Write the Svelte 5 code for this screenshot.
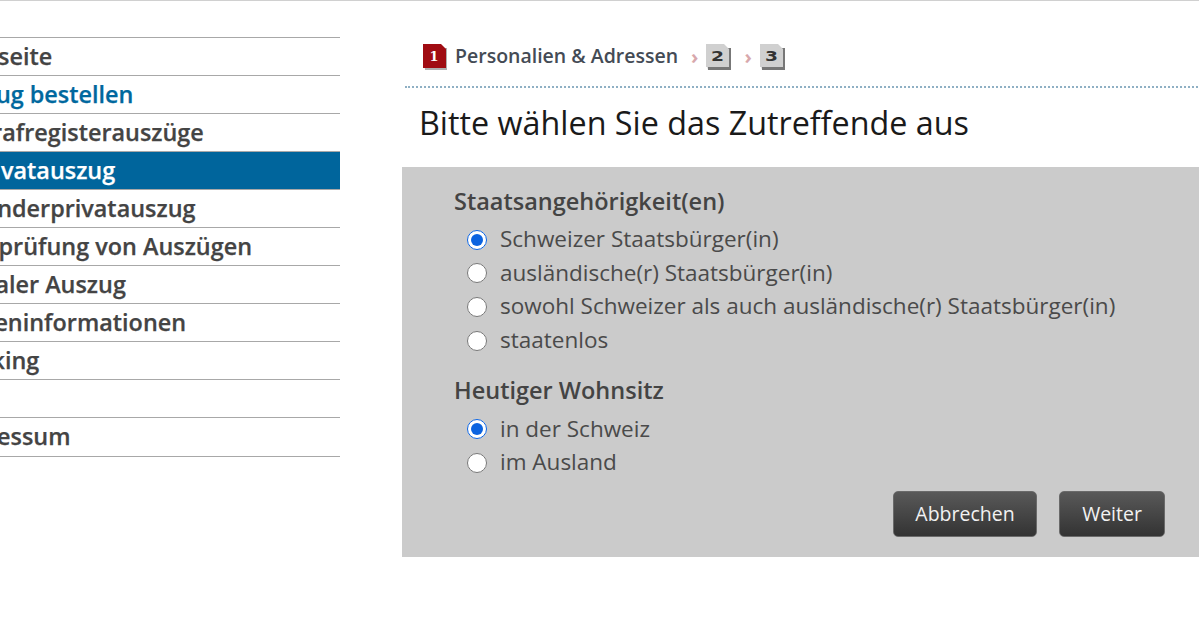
<script>
  const navItems = [
    { label: "Startseite" },
    { label: "Auszug bestellen", current: true },
    { label: "Strafregisterauszüge", sub: true },
    { label: "Privatauszug", sub: true, active: true },
    { label: "Sonderprivatauszug", sub: true },
    { label: "Überprüfung von Auszügen" },
    { label: "Digitaler Auszug" },
    { label: "Firmeninformationen" },
    { label: "Tracking" },
    { label: "FAQ" },
    { label: "Impressum" },
  ];

  const nationality = [
    { label: "Schweizer Staatsbürger(in)", checked: true },
    { label: "ausländische(r) Staatsbürger(in)" },
    { label: "sowohl Schweizer als auch ausländische(r) Staatsbürger(in)" },
    { label: "staatenlos" },
  ];

  const residence = [
    { label: "in der Schweiz", checked: true },
    { label: "im Ausland" },
  ];
</script>

<div class="page">
  <nav class="nav">
    <ul>
      {#each navItems as item}
        <li class:sub={item.sub} class:current={item.current} class:active={item.active}>{item.label}</li>
      {/each}
    </ul>
  </nav>

  <main class="main">
    <div class="steps">
      <svg class="step" viewBox="0 0 25 26" width="25" height="26">
        <path d="M0 4h24v22H2z" fill="#6e6e6e" opacity="0.55" />
        <path d="M0 0h18l5 5v19H0z" fill="#a00c12" />
        <text x="11" y="17" class="num-active">1</text>
      </svg>
      <span class="step-label">Personalien &amp; Adressen</span>
      <span class="chevron">›</span>
      <svg class="step" viewBox="0 0 25 26" width="25" height="26">
        <path d="M0 4h25v22H2z" fill="#777" />
        <path d="M0 0h18l5 5v18H0z" fill="#d0d0d0" />
        <text x="11.5" y="17" class="num" textLength="13" lengthAdjust="spacingAndGlyphs">2</text>
      </svg>
      <span class="chevron">›</span>
      <svg class="step" viewBox="0 0 25 26" width="25" height="26">
        <path d="M0 4h25v22H2z" fill="#777" />
        <path d="M0 0h18l5 5v18H0z" fill="#d0d0d0" />
        <text x="11.5" y="17" class="num" textLength="13" lengthAdjust="spacingAndGlyphs">3</text>
      </svg>
    </div>

    <h1>Bitte wählen Sie das Zutreffende aus</h1>

    <form class="panel">
      <fieldset>
        <legend>Staatsangehörigkeit(en)</legend>
        {#each nationality as option}
          <label><input type="radio" name="nationality" checked={option.checked} />{option.label}</label>
        {/each}
      </fieldset>

      <fieldset>
        <legend>Heutiger Wohnsitz</legend>
        {#each residence as option}
          <label><input type="radio" name="residence" checked={option.checked} />{option.label}</label>
        {/each}
      </fieldset>

      <div class="actions">
        <button type="button" class="abort">Abbrechen</button>
        <button type="button" class="next">Weiter</button>
      </div>
    </form>
  </main>
</div>

<style>
  :global(body) {
    background: #fff;
    overflow: hidden;
  }

  .page {
    display: flex;
    align-items: flex-start;
    width: 1199px;
    height: 630px;
    box-sizing: border-box;
    border-top: 1px solid #d0d0d0;
    overflow: hidden;
    font-family: "Open Sans", "Noto Sans", sans-serif;
    color: #444;
  }

  /* Nav is cut off by the left window edge */
  .nav {
    flex: none;
    width: 397px;
    margin-left: -57px;
    margin-top: 35.5px;
  }

  ul {
    list-style: none;
    margin: 0;
    padding: 0;
    border-top: 1px solid #a8a8a8;
  }

  li {
    height: 37.1px;
    line-height: 37px;
    border-bottom: 1px solid #a8a8a8;
    font-size: 23.4px;
    font-weight: 600;
    -webkit-text-stroke: 0.25px currentColor;
    white-space: nowrap;
  }

  li.sub {
    padding-left: 27px;
  }

  li.current {
    color: #00689e;
  }

  li.active {
    background: #00659c;
    color: #fff;
  }

  .main {
    flex: none;
    width: 820px;
    margin-left: 62px;
  }

  .steps {
    display: flex;
    align-items: center;
    height: 26px;
    margin: 43px 0 0 3px;
    padding: 0 0 16px 18px;
    border-bottom: 2px dotted #8fb0c4;
  }

  .step {
    flex: none;
  }

  .num-active,
  .num {
    font-weight: 700;
    text-anchor: middle;
  }

  .num-active {
    font-family: "DejaVu Serif", serif;
    font-size: 13px;
    fill: #fff;
  }

  .num {
    font-family: "DejaVu Sans", sans-serif;
    font-size: 14px;
    fill: #333;
  }

  .step-label {
    margin-left: 7px;
    padding-bottom: 4px;
    font-size: 19.5px;
    font-weight: 600;
    color: #444b55;
  }

  .chevron {
    margin: 0 8px 0 13px;
    font-size: 20px;
    font-weight: 700;
    line-height: 1;
    color: #d8a8ac;
  }

  h1 {
    margin: 13px 0 24px 17px;
    font-size: 32.3px;
    line-height: 42px;
    font-weight: 400;
    color: #1a1a1a;
  }

  .panel {
    height: 390px;
    box-sizing: border-box;
    padding: 20px 57px 0 52px;
    background: #cbcbcb;
  }

  fieldset {
    border: 0;
    margin: 0 0 19px;
    padding: 0;
  }

  legend {
    padding: 0;
    margin-bottom: 7px;
    font-size: 23.5px;
    line-height: 29px;
    font-weight: 600;
    color: #444;
  }

  label {
    display: flex;
    align-items: center;
    box-sizing: border-box;
    height: 33.6px;
    padding-bottom: 2px;
    font-size: 22.5px;
    color: #4a4a4a;
  }

  input {
    width: 20px;
    height: 20px;
    margin: 2px 13px 0 13px;
    accent-color: #0b63e0;
  }

  .actions {
    display: flex;
    justify-content: flex-end;
    gap: 22px;
    margin-top: -8px;
  }

  button {
    height: 46px;
    border: 1px solid #6a6a6a;
    border-radius: 5px;
    background: linear-gradient(#595959, #333);
    color: #f2f2f2;
    font-family: inherit;
    font-size: 19.5px;
    font-weight: 500;
  }

  .abort {
    width: 144px;
  }

  .next {
    width: 106px;
  }
</style>
